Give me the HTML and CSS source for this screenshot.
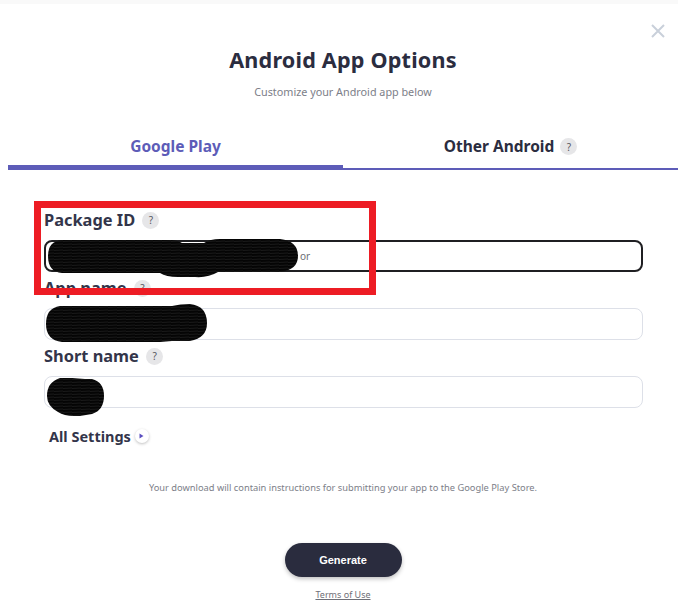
FILE: index.html
```html
<!DOCTYPE html>
<html lang="en">
<head>
<meta charset="utf-8">
<title>Android App Options</title>
<link rel="stylesheet" href="styles.css">
</head>
<body>
<div class="page">
  <button class="close" aria-label="Close">
    <svg width="14" height="14" viewBox="0 0 14 14"><path d="M1 1L13 13M13 1L1 13" stroke="#c9d0da" stroke-width="2" fill="none"/></svg>
  </button>
  <h1 class="title">Android App Options</h1>
  <p class="subtitle">Customize your Android app below</p>
  <div class="tabs">
    <div class="tab tab-active">Google Play</div>
    <div class="tab">Other Android <span class="help help-tab">?</span></div>
  </div>
  <form class="form">
    <div class="field">
      <div class="label">Package ID <span class="help">?</span></div>
      <div class="input input-focus"><span class="value">or</span></div>
    </div>
    <div class="field">
      <div class="label">App name <span class="help">?</span></div>
      <div class="input"></div>
    </div>
    <div class="field">
      <div class="label">Short name <span class="help">?</span></div>
      <div class="input"></div>
    </div>
    <div class="settings">All Settings <span class="arrow"><svg width="5" height="6" viewBox="0 0 5 6"><path d="M0.5 0.5L4.5 3L0.5 5.5Z" fill="#5b4fc0"/></svg></span></div>
  </form>
  <p class="note">Your download will contain instructions for submitting your app to the Google Play Store.</p>
  <button class="generate">Generate</button>
  <a class="terms">Terms of Use</a>

  <svg class="scribbles" width="678" height="609" viewBox="0 0 678 609" aria-hidden="true">
    <defs>
      <pattern id="scrawl" width="9" height="3" patternUnits="userSpaceOnUse">
        <rect width="9" height="3" fill="#050505"/>
        <path d="M0 1.5L9 1" stroke="#262626" stroke-width="0.6"/>
      </pattern>
    </defs>
    <path fill="url(#scrawl)" d="M62 240H168Q178 240 182 243H204Q210 239 220 239H280Q298 241 298 256Q298 270 280 272H218Q208 278 195 277H178Q166 277 160 273H62Q48 272 48 256Q48 241 62 240Z"/>
    <path fill="url(#scrawl)" d="M60 306H172Q180 304 190 304Q207 306 207 323Q207 338 190 341H172L160 342H62Q46 340 46 324Q46 308 60 306Z"/>
    <path fill="url(#scrawl)" d="M60 378H72L85 379H92Q104 382 104 396Q104 410 92 414L80 416H74Q64 416 58 412Q47 406 47 396Q47 382 60 378Z"/>
  </svg>
  <div class="redbox"></div>
</div>
</body>
</html>
```

FILE: styles.css
```css
* { box-sizing: border-box; }
html, body { margin: 0; padding: 0; background: #fff; }
body { font-family: "Noto Sans", "Open Sans", sans-serif; color: #2b2d3f; }
.page {
  position: relative;
  width: 678px;
  height: 609px;
  overflow: hidden;
  display: flex;
  flex-direction: column;
  align-items: center;
  padding-left: 8px;
  border-top: 4px solid #f9f9f9;
}
.close {
  position: absolute;
  top: 20px;
  left: 651px;
  width: 14px;
  height: 14px;
  padding: 0;
  border: 0;
  background: none;
  display: flex;
}
.title {
  margin: 39px 0 0;
  font-size: 21.6px;
  line-height: 34px;
  font-weight: 700;
  text-align: center;
  letter-spacing: 0.2px;
}
.subtitle {
  margin: 7px 0 0;
  font-size: 10.8px;
  line-height: 16px;
  color: #7c7e88;
  text-align: center;
}
.tabs {
  align-self: stretch;
  margin: 34px 0 0;
  display: flex;
  border-bottom: 2px solid #5d5cb8;
  height: 36px;
}
.tab {
  flex: 1;
  display: flex;
  align-items: flex-start;
  justify-content: center;
  gap: 6px;
  font-size: 15.5px;
  line-height: 24px;
  font-weight: 700;
}
.tab-active {
  color: #5d5cb8;
  border-bottom: 5px solid #5d5cb8;
  height: 36px;
  flex: 0 0 335px;
}
.help {
  display: inline-flex;
  align-items: center;
  justify-content: center;
  width: 17px;
  height: 17px;
  border-radius: 50%;
  background: #e6e6e8;
  color: #55565f;
  font-size: 10px;
  font-weight: 400;
  line-height: 1;
  vertical-align: 2px;
  margin-left: 3px;
}
.help-tab { margin: 4px 0 0; }
.form {
  align-self: stretch;
  margin: 38px 35px 0 36px;
  display: flex;
  flex-direction: column;
  gap: 4px;
}
.label {
  font-size: 16.4px;
  line-height: 24px;
  font-weight: 700;
  color: #33354a;
  margin-bottom: 8px;
}
.input {
  width: 599px;
  height: 32px;
  border: 1.5px solid #dde0e8;
  border-radius: 8px;
  background: #fff;
  display: flex;
  align-items: center;
}
.input-focus { border: 2px solid #1f1f22; }
.value {
  padding-left: 254px;
  font-size: 10px;
  color: #6d6e76;
}
.settings {
  margin: 12px 0 0 5px;
  display: flex;
  align-items: center;
  gap: 4px;
  font-size: 14.5px;
  line-height: 24px;
  font-weight: 700;
  color: #33354a;
}
.arrow {
  width: 14px;
  height: 14px;
  border-radius: 50%;
  background: #fff;
  box-shadow: 0 1px 3px rgba(0,0,0,.25);
  display: flex;
  align-items: center;
  justify-content: center;
}
.note {
  margin: 32px 0 0;
  font-size: 9.3px;
  line-height: 16px;
  color: #7c7e88;
  text-align: center;
}
.generate {
  margin-top: 47px;
  width: 117px;
  height: 34px;
  border: 0;
  border-radius: 17px;
  background: #2a2c3e;
  color: #fff;
  font-family: "Liberation Sans", sans-serif;
  font-size: 11px;
  font-weight: 700;
  box-shadow: 0 2px 4px rgba(0,0,0,.25);
}
.terms {
  margin-top: 11px;
  font-size: 9px;
  line-height: 14px;
  color: #6f7078;
  text-decoration: underline;
}
.scribbles { position: absolute; top: -4px; left: 0; pointer-events: none; }
.redbox {
  position: absolute;
  top: 197px;
  left: 34px;
  width: 342px;
  height: 94px;
  border: 7px solid #ed1c24;
  pointer-events: none;
}
```
